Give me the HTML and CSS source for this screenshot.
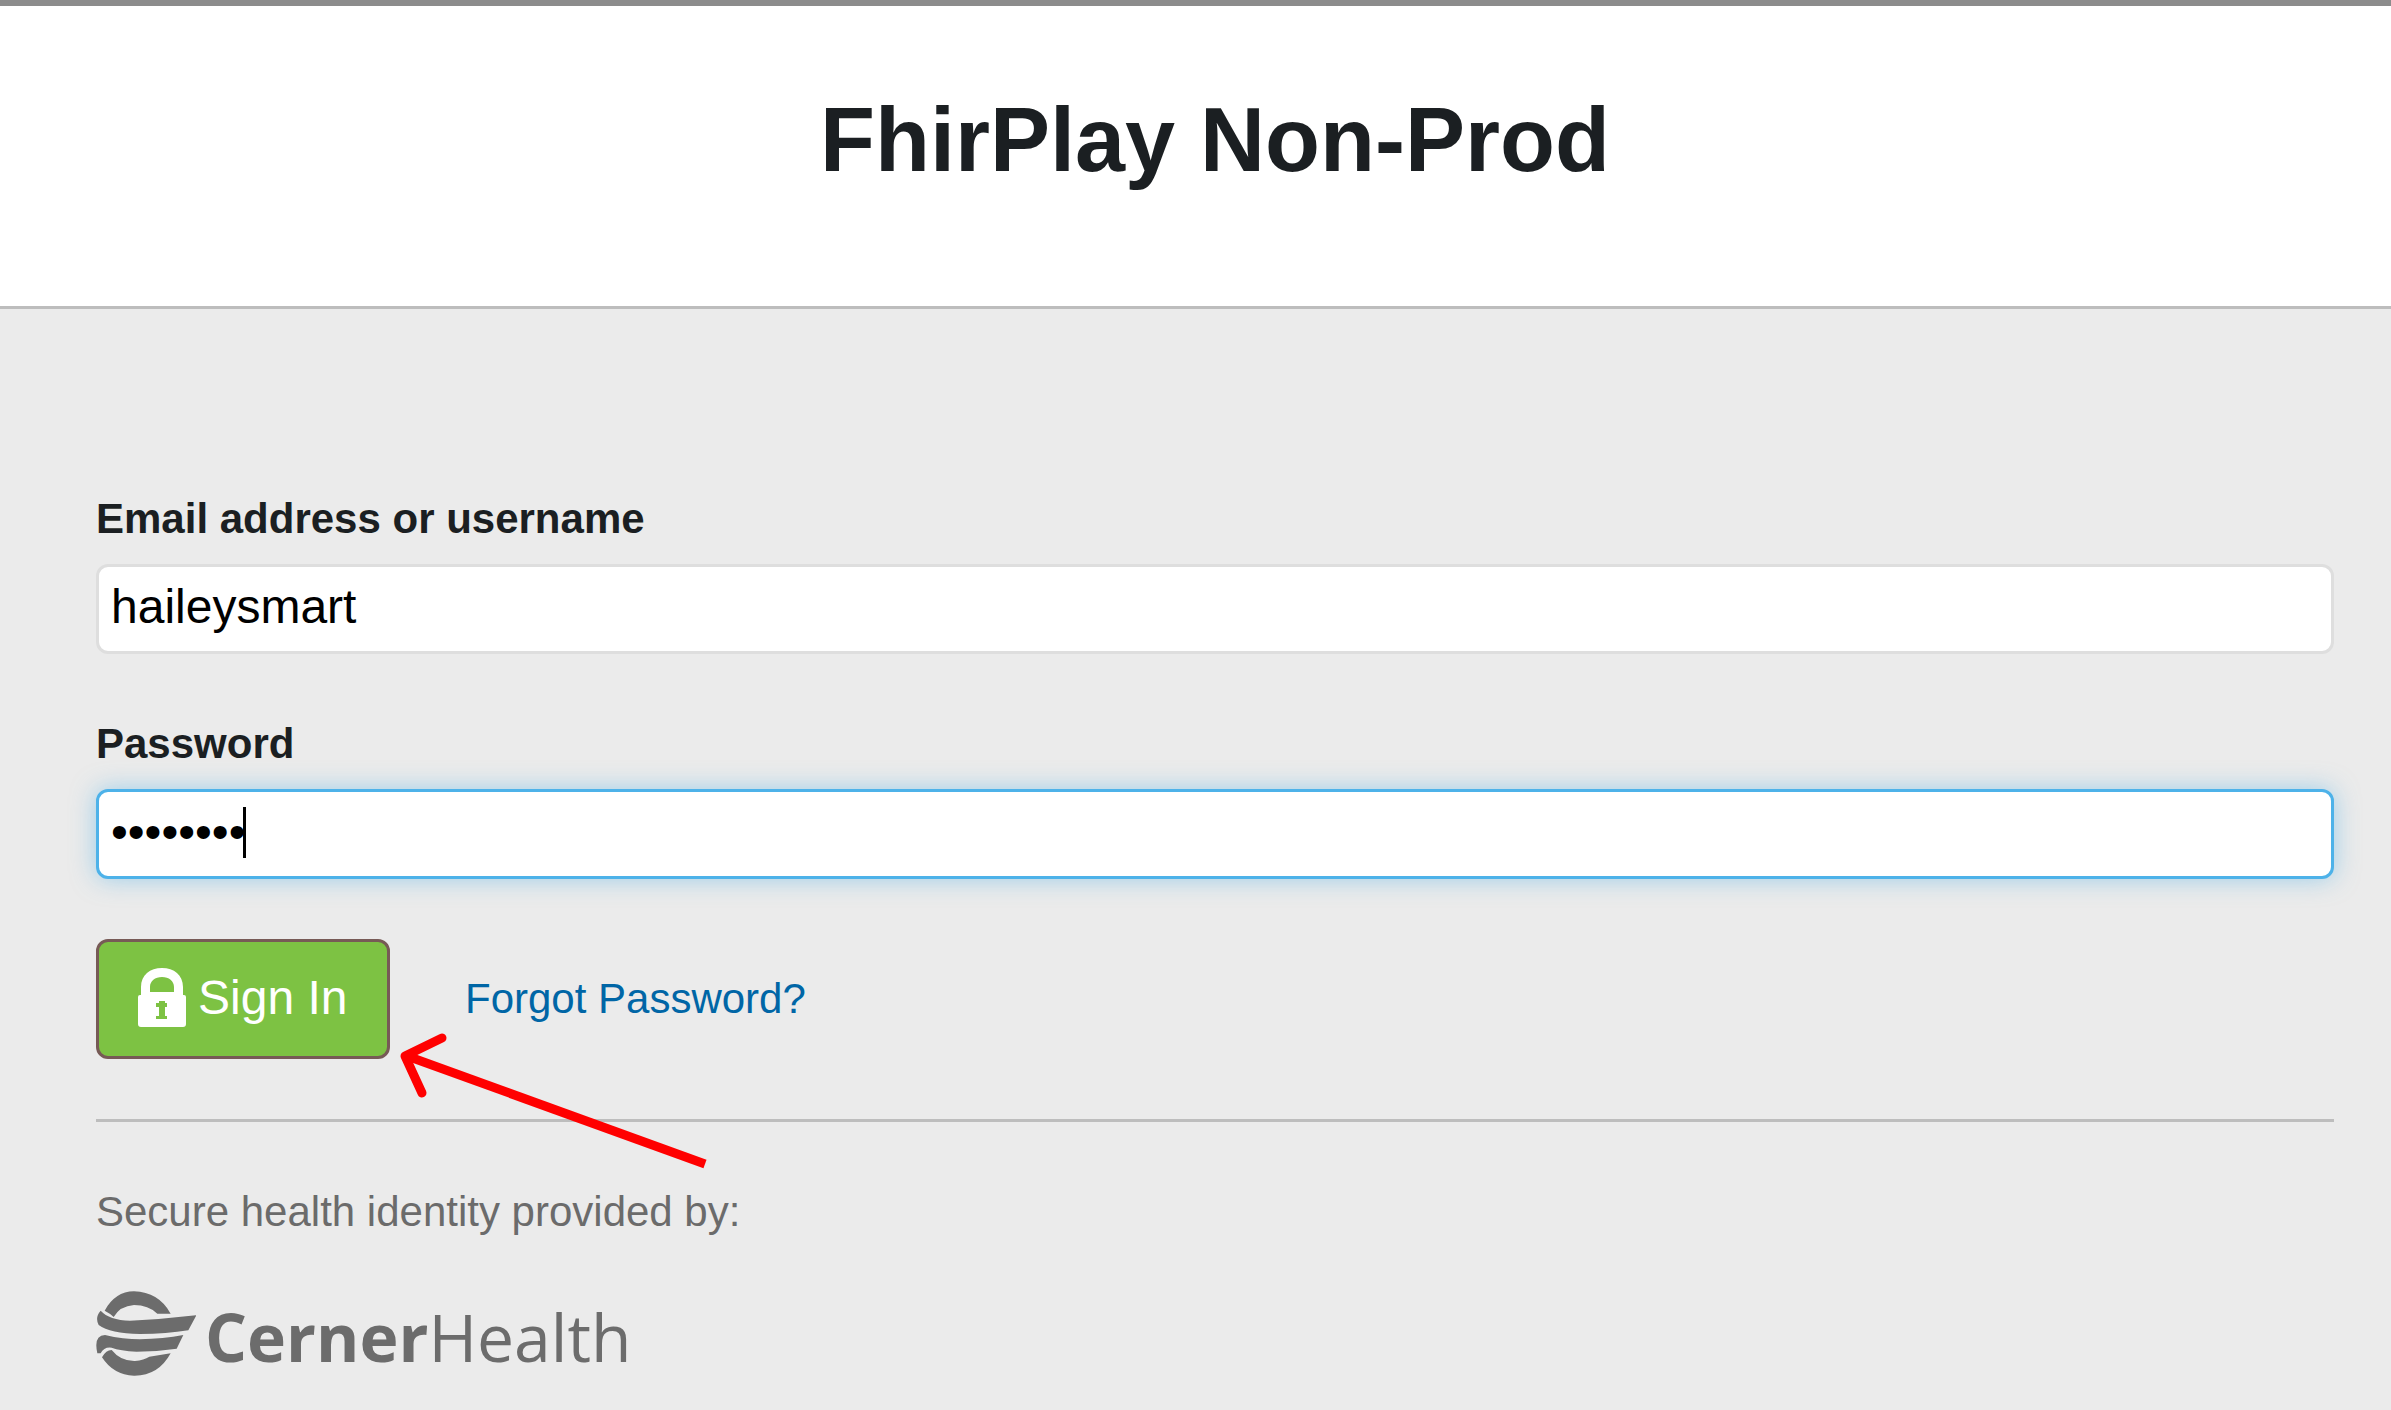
FILE: index.html
```html
<!DOCTYPE html>
<html lang="en">
  <head>
    <meta charset="UTF-8" />
    <meta name="viewport" content="width=device-width, initial-scale=1.0" />
    <title>FhirPlay Non-Prod</title>
    <link rel="stylesheet" href="styles.css">
  </head>
  <body>
  <header class="header">
    <h1>FhirPlay Non-Prod</h1>
  </header>

  <main class="container">
    <form id="loginForm">
      <div class="form-group">
        <label for="username">Email address or username</label>
        <input type="text" id="username" name="username" value="haileysmart" />
      </div>

      <div class="form-group">
        <label for="password">Password</label>
        <div class="password-field">
          <input type="password" id="password" name="password" class="active" value="password" />
          <span class="caret"></span>
        </div>
      </div>

      <div class="actions">
        <button type="submit" class="submit-btn">
          <svg class="lock" viewBox="0 0 48 60" aria-hidden="true">
            <path fill="#fff" fill-rule="evenodd" d="M3 27V19C3 7 12 0 24 0s21 7 21 19v8h1q2 0 2 2v27q0 3-3 3H3q-3 0-3-3V29q0-2 2-2zM12 24h24v-5c0-6-5-10-12-10s-12 4-12 10z" />
            <path fill="#7dc243" d="M21 33h6v2h2v4h-2v9h2v3H18v-3h3v-9h-3v-4h3z" />
          </svg>
          Sign In
        </button>
        <a href="#" class="forgot">Forgot Password?</a>

        <svg class="arrow" viewBox="0 0 320 140" aria-hidden="true">
          <path d="M15 17L313 125" />
          <path d="M50 -1L13 17L30 54" stroke-linecap="round" stroke-linejoin="round" />
        </svg>
      </div>
    </form>

    <hr />

    <p class="provided">Secure health identity provided by:</p>

    <div class="logo">
      <svg viewBox="48 60 300 261" aria-hidden="true">
        <path d="M74 122Q105 65 162 64Q236 66 272 131H232Q205 105 162 105Q120 108 101 141Q90 130 74 122z" />
        <path d="M62 122Q88 150 150 152Q250 148 349 136L325 181Q260 192 180 192Q90 190 56 165Q44 142 62 122z" />
        <path d="M52 250Q40 196 75 195Q130 208 180 208Q250 206 310 195L290 236Q230 245 170 245Q120 242 95 233Q72 230 62 250z" />
        <path d="M66 262Q78 240 95 240Q122 274 165 273Q192 270 208 260L272 250Q235 318 162 317Q100 315 66 262z" />
      </svg>
      <span class="wordmark"><b>Cerner</b>Health</span>
    </div>
  </main>
  </body>
</html>
```
FILE: styles.css
```css
* {
  margin: 0;
  padding: 0;
  box-sizing: border-box;
  font-family: "Liberation Sans", Arial, sans-serif;
}

body {
  background-color: #ebebeb;
  color: #1b1f22;
  min-height: 100vh;
}

.header {
  background: white;
  border-top: 6px solid #8c8c8c;
  border-bottom: 3px solid #bdbdbd;
  padding: 80px 57px 112px 96px;
}

h1 {
  text-align: center;
  font-size: 90px;
  line-height: 108px;
}

.container {
  padding: 183px 57px 33px 96px;
}

.form-group + .form-group {
  margin-top: 63px;
}

label {
  display: block;
  margin-bottom: 18px;
  font-size: 42px;
  line-height: 54px;
  font-weight: bold;
}

input {
  display: block;
  width: 100%;
  height: 90px;
  padding: 0 12px 6px;
  border: 3px solid #dedede;
  border-radius: 12px;
  background: white;
  color: black;
  font-size: 48px;
}

input:focus,
input.active {
  outline: none;
  border-color: #4db2e9;
  box-shadow: 0 0 24px rgba(77, 178, 233, 0.5);
}

.password-field {
  position: relative;
}

/* thick text cursor after the last bullet */
.caret {
  position: absolute;
  left: 147px;
  top: 18px;
  width: 3px;
  height: 51px;
  background: black;
}

.actions {
  position: relative;
  display: flex;
  align-items: center;
  gap: 75px;
  margin: 60px 0;
}

.submit-btn {
  display: flex;
  align-items: center;
  gap: 12px;
  min-width: 294px;
  height: 120px;
  padding: 0 39px 3px;
  background: #7dc243;
  border: 3px solid #775a56;
  border-radius: 12px;
  color: white;
  font-size: 48px;
  cursor: pointer;
}

.lock {
  width: 48px;
  height: 60px;
}

.forgot {
  color: #0066a6;
  text-decoration: none;
  font-size: 42px;
}

.forgot:hover {
  text-decoration: underline;
}

.arrow {
  position: absolute;
  left: 296px;
  top: 100px;
  width: 320px;
  height: 140px;
  overflow: visible;
  fill: none;
  stroke: red;
  stroke-width: 9px;
  pointer-events: none;
}

hr {
  border: none;
  border-top: 3px solid #bdbdbd;
  margin-bottom: 63px;
}

.provided {
  margin-bottom: 51px;
  color: #6b6b6b;
  font-size: 42px;
  line-height: 54px;
}

.logo {
  display: flex;
  align-items: flex-start;
  gap: 9px;
  color: #6c6c6c;
}

.logo svg {
  width: 100px;
  height: 87px;
  fill: #6c6c6c;
}

.wordmark,
.wordmark b {
  font-family: "Open Sans", sans-serif;
  font-size: 66px;
  line-height: 93px;
}
```
